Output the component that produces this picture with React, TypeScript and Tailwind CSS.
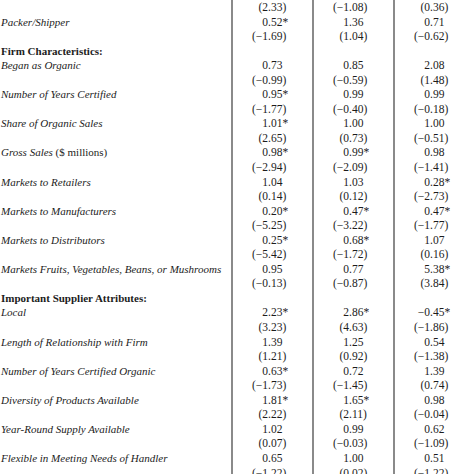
type Row =
  | { kind: "head"; label: string }
  | { kind: "var"; label: React.ReactNode; coef: string[]; t: string[] }
  | { kind: "t"; t: string[] };

const rows: Row[] = [
  { kind: "t", t: ["(2.33)", "(−1.08)", "(0.36)"] },
  { kind: "var", label: "Packer/Shipper", coef: ["0.52*", "1.36", "0.71"], t: ["(−1.69)", "(1.04)", "(−0.62)"] },
  { kind: "head", label: "Firm Characteristics:" },
  { kind: "var", label: "Began as Organic", coef: ["0.73", "0.85", "2.08"], t: ["(−0.99)", "(−0.59)", "(1.48)"] },
  { kind: "var", label: "Number of Years Certified", coef: ["0.95*", "0.99", "0.99"], t: ["(−1.77)", "(−0.40)", "(−0.18)"] },
  { kind: "var", label: "Share of Organic Sales", coef: ["1.01*", "1.00", "1.00"], t: ["(2.65)", "(0.73)", "(−0.51)"] },
  {
    kind: "var",
    label: (
      <>
        Gross Sales <span className="not-italic">($ millions)</span>
      </>
    ),
    coef: ["0.98*", "0.99*", "0.98"],
    t: ["(−2.94)", "(−2.09)", "(−1.41)"],
  },
  { kind: "var", label: "Markets to Retailers", coef: ["1.04", "1.03", "0.28*"], t: ["(0.14)", "(0.12)", "(−2.73)"] },
  { kind: "var", label: "Markets to Manufacturers", coef: ["0.20*", "0.47*", "0.47*"], t: ["(−5.25)", "(−3.22)", "(−1.77)"] },
  { kind: "var", label: "Markets to Distributors", coef: ["0.25*", "0.68*", "1.07"], t: ["(−5.42)", "(−1.72)", "(0.16)"] },
  {
    kind: "var",
    label: "Markets Fruits, Vegetables, Beans, or Mushrooms",
    coef: ["0.95", "0.77", "5.38*"],
    t: ["(−0.13)", "(−0.87)", "(3.84)"],
  },
  { kind: "head", label: "Important Supplier Attributes:" },
  { kind: "var", label: "Local", coef: ["2.23*", "2.86*", "−0.45*"], t: ["(3.23)", "(4.63)", "(−1.86)"] },
  { kind: "var", label: "Length of Relationship with Firm", coef: ["1.39", "1.25", "0.54"], t: ["(1.21)", "(0.92)", "(−1.38)"] },
  { kind: "var", label: "Number of Years Certified Organic", coef: ["0.63*", "0.72", "1.39"], t: ["(−1.73)", "(−1.45)", "(0.74)"] },
  { kind: "var", label: "Diversity of Products Available", coef: ["1.81*", "1.65*", "0.98"], t: ["(2.22)", "(2.11)", "(−0.04)"] },
  { kind: "var", label: "Year-Round Supply Available", coef: ["1.02", "0.99", "0.62"], t: ["(0.07)", "(−0.03)", "(−1.09)"] },
  { kind: "var", label: "Flexible in Meeting Needs of Handler", coef: ["0.65", "1.00", "0.51"], t: ["(−1.22)", "(0.02)", "(−1.22)"] },
];

// splits a number at its decimal point so the points line up in a column
const Num = ({ v }: { v?: string }) => {
  if (!v) return <div className="border-l-2 border-[#8a8a8a]" />;
  const i = v.indexOf(".");
  return (
    <div className="flex border-l-2 border-[#8a8a8a] text-[11.5px]">
      <span className="w-[35px] shrink-0 text-right">{v.slice(0, i)}</span>
      <span className="whitespace-nowrap">{v.slice(i)}</span>
    </div>
  );
};

const Line = ({ label, vals, bold }: { label?: React.ReactNode; vals?: string[]; bold?: boolean }) => (
  <div className="grid h-[14.56px] grid-cols-[231px_81px_81px_81px]">
    <div className={`whitespace-nowrap pl-[1px] text-[11px] ${bold ? "font-bold" : "italic"}`}>{label}</div>
    <Num v={vals?.[0]} />
    <Num v={vals?.[1]} />
    <Num v={vals?.[2]} />
  </div>
);

export default function App() {
  return (
    <div
      className="h-[474px] w-[474px] overflow-hidden bg-white leading-[14.56px] text-[#1c1c1c]"
      style={{ fontFamily: '"Liberation Serif", "Times New Roman", serif' }}
    >
      {rows.map((r, k) => {
        if (r.kind === "head") return <Line key={k} label={r.label} bold />;
        if (r.kind === "t") return <Line key={k} vals={r.t} />;
        return (
          <div key={k}>
            <Line label={r.label} vals={r.coef} />
            <Line vals={r.t} />
          </div>
        );
      })}
    </div>
  );
}
